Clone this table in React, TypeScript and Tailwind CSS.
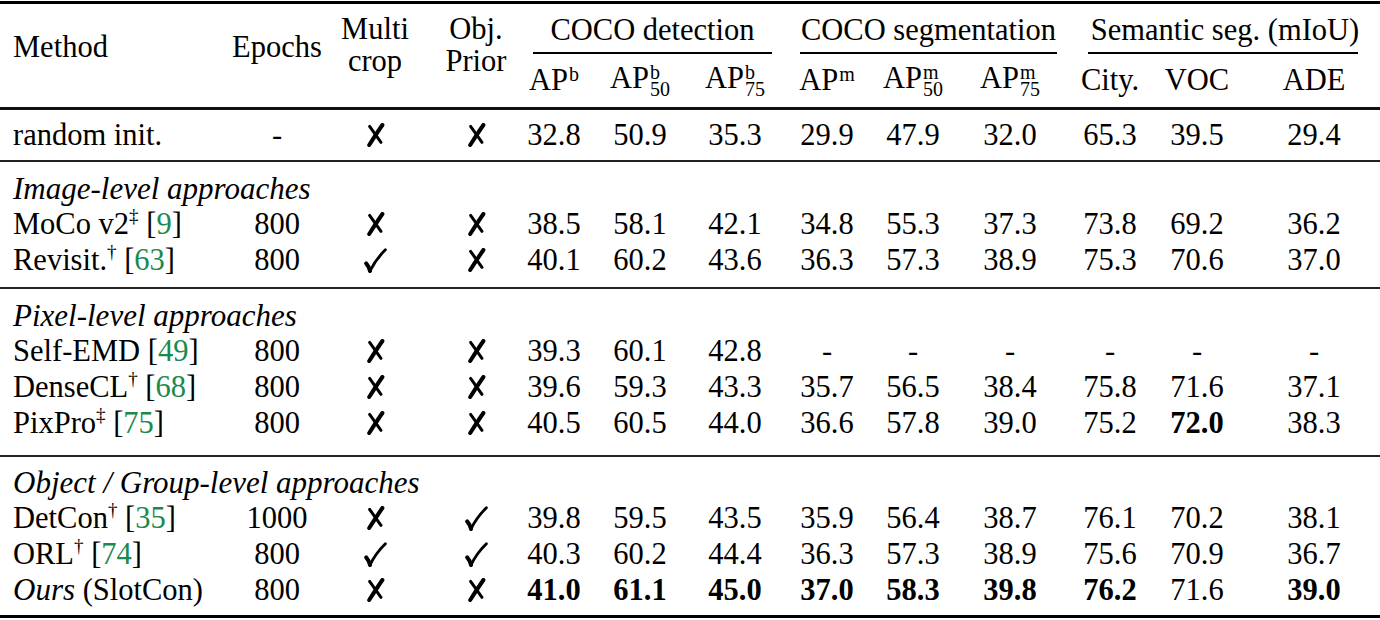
import type { ReactNode } from 'react'

const GRID =
  'grid grid-cols-[230px_94px_102px_100px_56px_116px_74px_110px_62px_132px_68px_106px_128px]'

type Val = [string, boolean?]

type Row = {
  name: ReactNode
  epochs: string
  multi: boolean
  prior: boolean
  vals: Val[]
}

const Cross = () => (
  <svg width="19" height="24" viewBox="0 0 19 24" className="text-black">
    <path d="M16.4 2 C12.5 7.5 8 14.5 3.2 22" stroke="currentColor" strokeWidth="4" strokeLinecap="round" fill="none" />
    <path d="M3.6 3.4 L15 19.4" stroke="currentColor" strokeWidth="3" strokeLinecap="round" fill="none" />
  </svg>
)

const Check = () => (
  <svg width="23" height="25" viewBox="0 0 23 25" className="text-black">
    <path d="M2.2 15.4 Q4.6 18 6 23" stroke="currentColor" strokeWidth="4" strokeLinecap="round" fill="none" />
    <path d="M6 23 Q11.5 11.5 21.4 1.8" stroke="currentColor" strokeWidth="2.8" strokeLinecap="round" fill="none" />
  </svg>
)

const Cite = ({ n }: { n: string }) => (
  <>
    {' '}[<span className="text-[#1a8a4b]">{n}</span>]
  </>
)

const Mark = ({ m }: { m: string }) => (
  <sup className="text-[19px] top-[-0.6em]">{m}</sup>
)

// AP with a stacked superscript / subscript
const AP = ({ sup, sub }: { sup: string; sub?: string }) => (
  <span className="whitespace-nowrap">
    AP
    {sub ? (
      <span className="inline-block align-[-8px] text-[20px] leading-[17px] ml-[1px]">
        <span className="block">{sup}</span>
        <span className="block">{sub}</span>
      </span>
    ) : (
      <span className="inline-block align-[9px] text-[20px] leading-[17px] ml-[1px]">{sup}</span>
    )}
  </span>
)

const groups: { title: string; pt: string; pb: string; rows: Row[] }[] = [
  {
    title: 'Image-level approaches',
    pt: 'pt-[8px]',
    pb: 'pb-[9px]',
    rows: [
      {
        name: <>MoCo v2<Mark m="‡" /><Cite n="9" /></>,
        epochs: '800', multi: false, prior: false,
        vals: [['38.5'], ['58.1'], ['42.1'], ['34.8'], ['55.3'], ['37.3'], ['73.8'], ['69.2'], ['36.2']],
      },
      {
        name: <>Revisit.<Mark m="†" /><Cite n="63" /></>,
        epochs: '800', multi: true, prior: false,
        vals: [['40.1'], ['60.2'], ['43.6'], ['36.3'], ['57.3'], ['38.9'], ['75.3'], ['70.6'], ['37.0']],
      },
    ],
  },
  {
    title: 'Pixel-level approaches',
    pt: 'pt-[8px]',
    pb: 'pb-[14px]',
    rows: [
      {
        name: <>Self-EMD<Cite n="49" /></>,
        epochs: '800', multi: false, prior: false,
        vals: [['39.3'], ['60.1'], ['42.8'], ['-'], ['-'], ['-'], ['-'], ['-'], ['-']],
      },
      {
        name: <>DenseCL<Mark m="†" /><Cite n="68" /></>,
        epochs: '800', multi: false, prior: false,
        vals: [['39.6'], ['59.3'], ['43.3'], ['35.7'], ['56.5'], ['38.4'], ['75.8'], ['71.6'], ['37.1']],
      },
      {
        name: <>PixPro<Mark m="‡" /><Cite n="75" /></>,
        epochs: '800', multi: false, prior: false,
        vals: [['40.5'], ['60.5'], ['44.0'], ['36.6'], ['57.8'], ['39.0'], ['75.2'], ['72.0', true], ['38.3']],
      },
    ],
  },
  {
    title: 'Object / Group-level approaches',
    pt: 'pt-[7px]',
    pb: 'pb-[7px]',
    rows: [
      {
        name: <>DetCon<Mark m="†" /><Cite n="35" /></>,
        epochs: '1000', multi: false, prior: true,
        vals: [['39.8'], ['59.5'], ['43.5'], ['35.9'], ['56.4'], ['38.7'], ['76.1'], ['70.2'], ['38.1']],
      },
      {
        name: <>ORL<Mark m="†" /><Cite n="74" /></>,
        epochs: '800', multi: true, prior: true,
        vals: [['40.3'], ['60.2'], ['44.4'], ['36.3'], ['57.3'], ['38.9'], ['75.6'], ['70.9'], ['36.7']],
      },
      {
        name: <><i className="text-[31px]">Ours</i> (SlotCon)</>,
        epochs: '800', multi: false, prior: false,
        vals: [['41.0', true], ['61.1', true], ['45.0', true], ['37.0', true], ['58.3', true], ['39.8', true], ['76.2', true], ['71.6'], ['39.0', true]],
      },
    ],
  },
]

const Cell = ({ children, bold }: { children: ReactNode; bold?: boolean }) => (
  <div className={`flex items-center justify-center whitespace-nowrap ${bold ? 'font-bold' : ''}`}>
    <span>{children}</span>
  </div>
)

const DataRow = ({ row, h }: { row: Row; h: string }) => (
  <div className={`${GRID} ${h}`}>
    <div className="flex items-center pl-[13px] whitespace-nowrap">
      <span>{row.name}</span>
    </div>
    <Cell>{row.epochs}</Cell>
    <div className="flex items-center justify-center">{row.multi ? <Check /> : <Cross />}</div>
    <div className="flex items-center justify-center">{row.prior ? <Check /> : <Cross />}</div>
    {row.vals.map(([v, b], i) => (
      <Cell key={i} bold={b}>{v}</Cell>
    ))}
  </div>
)

const Header = () => (
  <div className={`${GRID} grid-rows-[50px_53px]`}>
    <div className="row-span-2 flex items-center pl-[13px] pb-[16px]">Method</div>
    <div className="row-span-2 flex items-center justify-center pb-[16px]">Epochs</div>
    <div className="row-span-2 flex flex-col items-center justify-center leading-[32px] pb-[22px]">
      <span>Multi</span>
      <span>crop</span>
    </div>
    <div className="row-span-2 flex flex-col items-center justify-center leading-[32px] pb-[22px]">
      <span>Obj.</span>
      <span>Prior</span>
    </div>
    <div className="col-span-3 flex flex-col justify-end">
      <div className="h-[36px] leading-[36px] text-center whitespace-nowrap ml-[7px]">COCO detection</div>
      <div className="mt-[4px] mb-[0.5px] h-[1.5px] bg-black ml-[7px]" />
    </div>
    <div className="col-span-3 flex flex-col justify-end">
      <div className="h-[36px] leading-[36px] text-center whitespace-nowrap ml-[28px] mr-[19px]">COCO segmentation</div>
      <div className="mt-[4px] mb-[0.5px] h-[1.5px] bg-black ml-[28px] mr-[19px]" />
    </div>
    <div className="col-span-3 flex flex-col justify-end">
      <div className="h-[36px] leading-[36px] text-center whitespace-nowrap ml-[12px] mr-[16px]">Semantic seg. (mIoU)</div>
      <div className="mt-[4px] mb-[0.5px] h-[1.5px] bg-black ml-[12px] mr-[20px]" />
    </div>
    <Cell><AP sup="b" /></Cell>
    <Cell><AP sup="b" sub="50" /></Cell>
    <Cell><AP sup="b" sub="75" /></Cell>
    <Cell><AP sup="m" /></Cell>
    <Cell><AP sup="m" sub="50" /></Cell>
    <Cell><AP sup="m" sub="75" /></Cell>
    <Cell>City.</Cell>
    <Cell>VOC</Cell>
    <Cell>ADE</Cell>
  </div>
)

export default function App() {
  return (
    <div className="w-[1380px] h-[620px] overflow-hidden bg-white text-black font-['Liberation_Serif',serif] text-[30.5px] leading-none">
      <div className="pt-[1px]">
        <div className="h-[3px] bg-black" />
        <Header />
        <div className="h-[3px] bg-[#111]" />
        <DataRow
          h="h-[50px]"
          row={{
            name: 'random init.',
            epochs: '-',
            multi: false,
            prior: false,
            vals: [['32.8'], ['50.9'], ['35.3'], ['29.9'], ['47.9'], ['32.0'], ['65.3'], ['39.5'], ['29.4']],
          }}
        />
        {groups.map((g) => (
          <div key={g.title}>
            <div className="h-[2px] bg-[#222]" />
            <div className={`${g.pt} ${g.pb}`}>
              <div className="h-[36px] flex items-center pl-[13px] italic text-[31px] whitespace-nowrap">{g.title}</div>
              {g.rows.map((r, i) => (
                <DataRow key={i} row={r} h="h-[36px]" />
              ))}
            </div>
          </div>
        ))}
        <div className="h-[3px] bg-black" />
      </div>
    </div>
  )
}
